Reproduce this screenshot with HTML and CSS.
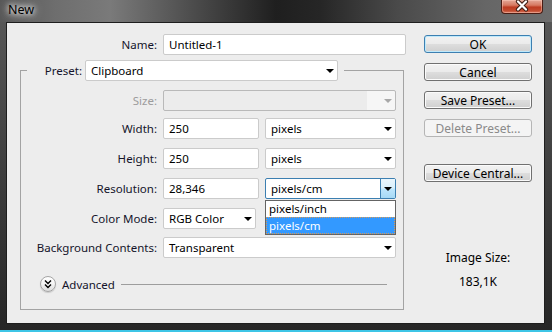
FILE: index.html
```html
<!DOCTYPE html>
<html>
<head>
<meta charset="utf-8">
<title>New</title>
<link rel="stylesheet" href="styles.css">
</head>
<body>
<div class="window">
  <div class="titlebar">
    <span class="title">New</span>
    <div class="close">
      <svg width="14" height="12" viewBox="0 0 14 12">
        <path d="M3 1.5 L11 9.5 M11 1.5 L3 9.5" stroke="#3b1b12" stroke-width="4.2" stroke-linecap="round"/>
        <path d="M3 1.5 L11 9.5 M11 1.5 L3 9.5" stroke="#ffffff" stroke-width="2.2" stroke-linecap="round"/>
      </svg>
    </div>
  </div>
  <div class="client">
    <div class="main">
      <div class="name-row">
        <span class="lbl name-lbl">Name:</span>
        <div class="field name-field">Untitled-1</div>
      </div>
      <fieldset class="group">
        <legend class="preset">
          <span class="preset-lbl">Preset:</span>
          <div class="select preset-select">Clipboard<span class="arrow"></span></div>
        </legend>
        <div class="row r-size">
          <span class="lbl disabled-text">Size:</span>
          <div class="select full disabled"><span class="arrow"></span></div>
        </div>
        <div class="row r-width">
          <span class="lbl">Width:</span>
          <div class="field num">250</div>
          <div class="select unit">pixels<span class="arrow"></span></div>
        </div>
        <div class="row r-height">
          <span class="lbl">Height:</span>
          <div class="field num">250</div>
          <div class="select unit">pixels<span class="arrow"></span></div>
        </div>
        <div class="row r-res">
          <span class="lbl">Resolution:</span>
          <div class="field num">28,346</div>
          <div class="select unit open">pixels/cm<span class="arrow-btn"><span class="arrow"></span></span>
            <div class="dropdown">
              <div class="item">pixels/inch</div>
              <div class="item sel">pixels/cm</div>
            </div>
          </div>
        </div>
        <div class="row r-mode">
          <span class="lbl">Color Mode:</span>
          <div class="select mode">RGB Color<span class="arrow"></span></div>
        </div>
        <div class="row r-bg">
          <span class="lbl">Background Contents:</span>
          <div class="select full">Transparent<span class="arrow"></span></div>
        </div>
        <div class="advanced">
          <span class="adv-icon">
            <svg width="16" height="16" viewBox="0 0 16 16">
              <path d="M5 4.5 L8 7.5 L11 4.5 M5 8.5 L8 11.5 L11 8.5" fill="none" stroke="#000" stroke-width="1.4"/>
            </svg>
          </span>
          <span class="adv-text">Advanced</span>
          <span class="adv-line"></span>
        </div>
      </fieldset>
    </div>
    <div class="side">
      <div class="btn default">OK</div>
      <div class="btn">Cancel</div>
      <div class="btn">Save Preset...</div>
      <div class="btn disabled">Delete Preset...</div>
      <div class="btn device">Device Central...</div>
      <div class="info">
        <div>Image Size:</div>
        <div>183,1K</div>
      </div>
    </div>
  </div>
</div>
</body>
</html>
```

FILE: styles.css
```css
* { box-sizing: border-box; }
html, body { margin: 0; padding: 0; }
body {
  width: 552px;
  height: 332px;
  overflow: hidden;
  background: #2e2e2e;
  font-family: "Noto Sans", "Open Sans", sans-serif;
  font-size: 11.5px;
  color: #14142a;
}

.window {
  width: 552px;
  height: 332px;
  display: flex;
  flex-direction: column;
  padding: 0 7px 6px 6px;
  background: linear-gradient(180deg, #5a5a5a 0%, #3a3a3a 60%, #262626 100%);
  border-bottom: 2px solid #3ec5e6;
}

.titlebar {
  height: 22px;
  flex: none;
  margin: 0 -7px 0 -6px;
  padding: 0 9px 0 8px;
  display: flex;
  justify-content: space-between;
  align-items: flex-start;
  background: linear-gradient(90deg, #585858 0%, #6e6e6e 10%, #7a7a7a 20%, #4c4c4c 35%, #1f1f1f 50%, #262626 58%, #4a4a4a 72%, #666666 88%, #6e6e6e 100%);
}

.title {
  line-height: 20px;
  font-size: 12.5px;
  color: #000;
  text-shadow: 0 0 5px #fff, 0 0 9px rgba(255,255,255,0.8), 0 0 12px rgba(255,255,255,0.6);
}

.close {
  width: 42px;
  height: 14px;
  border: 1px solid #4a1d14;
  border-top: none;
  border-radius: 0 0 4px 4px;
  background: linear-gradient(180deg, #e4a898 0%, #d77a62 40%, #bd3c22 55%, #c24a2e 80%, #d6735a 100%);
  box-shadow: inset 0 0 0 1px rgba(255, 210, 195, 0.45);
  display: flex;
  justify-content: center;
  align-items: flex-start;
}
.close svg { display: block; }

.client {
  flex: 1;
  display: flex;
  background: #ededed;
  border: 1px solid #1e1e1e;
}

.main {
  width: 384px;
  flex: none;
  margin-left: 13px;
  padding-top: 11px;
  display: flex;
  flex-direction: column;
}

.lbl { text-align: right; white-space: nowrap; flex: none; }
.disabled-text { color: #9c9c9c; }

.name-row {
  display: flex;
  align-items: center;
  gap: 6px;
  height: 21px;
}
.name-lbl { width: 137px; }
.name-field { width: 243px; flex: none; }

.field {
  height: 21px;
  background: #fff;
  border: 1px solid #cbcbcb;
  border-radius: 2px;
  padding: 0 5px;
  display: flex;
  align-items: center;
  color: #000;
  flex: none;
}

.select {
  position: relative;
  flex: none;
  height: 21px;
  background: #fff;
  border: 1px solid #cbcbcb;
  border-radius: 2px;
  padding: 0 20px 0 5px;
  display: flex;
  align-items: center;
  color: #000;
  white-space: nowrap;
}
.arrow {
  position: absolute;
  right: 3px;
  top: 8px;
  width: 0;
  height: 0;
  border-left: 4px solid transparent;
  border-right: 4px solid transparent;
  border-top: 4px solid #000;
}

.group {
  margin: 5px 0 0 0;
  padding: 9px 7px 17px 0;
  border: 1px solid #a3a3a3;
  min-width: 0;
  width: 384px;
}

.preset {
  margin-left: 6px;
  padding: 0 6px 0 0;
  display: flex;
  align-items: center;
}
.preset-lbl { width: 55px; text-align: right; margin-right: 3px; }
.preset-select { width: 253px; }

.row {
  display: flex;
  align-items: center;
  gap: 6px;
  height: 21px;
}
.row .lbl { width: 136px; }
.r-width { margin-top: 7px; }
.r-height, .r-res, .r-mode { margin-top: 9px; }
.r-bg { margin-top: 8px; }

.full { width: 233px; }
.num { width: 96px; }
.unit { width: 131px; }
.mode { width: 93px; }

.disabled {
  background: linear-gradient(90deg, #ececec 0%, #ececec 88%, #f6f6f6 88%);
  border-color: #b9b9b9;
}
.disabled .arrow { border-top-color: #a8a8a8; }

.open { border-color: #3c7fb1; }
.arrow-btn {
  position: absolute;
  right: 0;
  top: 0;
  bottom: 0;
  width: 15px;
  border-left: 1px solid #3c7fb1;
  background: linear-gradient(180deg, #eaf6fd 0%, #d9f0fc 48%, #bee6fd 52%, #a7d9f5 100%);
}
.arrow-btn .arrow { right: 3px; }

.dropdown {
  position: absolute;
  left: -1px;
  top: 21px;
  width: 131px;
  background: #fff;
  border: 1px solid #646464;
  z-index: 5;
  padding: 0;
}
.item {
  height: 16px;
  line-height: 16px;
  padding-left: 3px;
  color: #000;
}
.item.sel {
  height: 17px;
  line-height: 17px;
  background: #3399ff;
  color: #fff;
  outline: 1px dotted #d89a55;
  outline-offset: -1px;
}

.advanced {
  margin-top: 18px;
  height: 16px;
  display: flex;
  align-items: center;
  padding: 0 9px 0 19px;
}
.adv-icon {
  width: 16px;
  height: 16px;
  border-radius: 50%;
  border: 1px solid #a5a5a5;
  background: linear-gradient(180deg, #ffffff 0%, #f4f4f4 50%, #dcdcdc 100%);
  box-shadow: 0 1px 1px rgba(0,0,0,0.15);
  position: relative;
  flex: none;
}
.adv-icon svg { position: absolute; left: -1px; top: -1px; }
.adv-text { margin-left: 6px; }
.adv-line {
  flex: 1;
  height: 1px;
  margin-left: 6px;
  background: #9d9d9d;
}

.side {
  width: 108px;
  margin-left: auto;
  margin-right: 12px;
  padding-top: 12px;
  display: flex;
  flex-direction: column;
  gap: 10px;
}
.btn {
  height: 18px;
  border: 1px solid #707070;
  border-radius: 3px;
  background: linear-gradient(180deg, #f2f2f2 0%, #ebebeb 48%, #dddddd 52%, #cfcfcf 100%);
  box-shadow: inset 0 0 0 1px #fbfbfb;
  display: flex;
  align-items: center;
  justify-content: center;
  color: #000;
  white-space: nowrap;
  font-size: 12px;
}
.btn.default {
  border-color: #3c7fb1;
  box-shadow: inset 0 0 0 1px #bfe9fb;
}
.btn.disabled {
  border-color: #b5b5b5;
  background: #f4f4f4;
  box-shadow: none;
  color: #8a8a8a;
}
.btn.device { margin-top: 17px; }

.info {
  margin-top: 54px;
  text-align: center;
  line-height: 24px;
  color: #000;
  font-size: 12px;
}
```
